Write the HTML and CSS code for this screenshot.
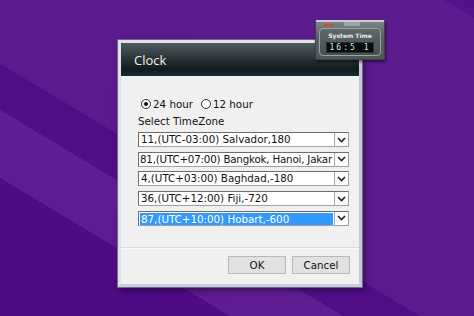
FILE: index.html
```html
<!DOCTYPE html>
<html>
<head>
<meta charset="utf-8">
<link rel="stylesheet" href="styles.css">
</head>
<body>
<div class="desktop">
  <div class="dialog">
    <div class="titlebar">Clock</div>
    <div class="content">
      <div class="radios">
        <label class="radio"><span class="dot checked"></span>24 hour</label>
        <label class="radio"><span class="dot"></span>12 hour</label>
      </div>
      <div class="label">Select TimeZone</div>
      <div class="combo"><span class="val">11,(UTC-03:00) Salvador,180</span><span class="arrow"><svg width="9" height="6" viewBox="0 0 9 6"><path d="M1 1 L4.5 4.5 L8 1" fill="none" stroke="#222" stroke-width="1.6"/></svg></span></div>
      <div class="combo"><span class="val tight">81,(UTC+07:00) Bangkok, Hanoi, Jakar</span><span class="arrow"><svg width="9" height="6" viewBox="0 0 9 6"><path d="M1 1 L4.5 4.5 L8 1" fill="none" stroke="#222" stroke-width="1.6"/></svg></span></div>
      <div class="combo"><span class="val">4,(UTC+03:00) Baghdad,-180</span><span class="arrow"><svg width="9" height="6" viewBox="0 0 9 6"><path d="M1 1 L4.5 4.5 L8 1" fill="none" stroke="#222" stroke-width="1.6"/></svg></span></div>
      <div class="combo"><span class="val">36,(UTC+12:00) Fiji,-720</span><span class="arrow"><svg width="9" height="6" viewBox="0 0 9 6"><path d="M1 1 L4.5 4.5 L8 1" fill="none" stroke="#222" stroke-width="1.6"/></svg></span></div>
      <div class="combo focused"><span class="val">87,(UTC+10:00) Hobart,-600</span><span class="arrow"><svg width="9" height="6" viewBox="0 0 9 6"><path d="M1 1 L4.5 4.5 L8 1" fill="none" stroke="#222" stroke-width="1.6"/></svg></span></div>
    </div>
    <div class="footer">
      <button class="btn">OK</button>
      <button class="btn">Cancel</button>
    </div>
  </div>
  <div class="gadget">
    <div class="g-top"><span class="g-dot"></span><span class="g-dot"></span><span class="g-tab"></span></div>
    <div class="g-panel">
      <div class="g-title">System Time</div>
      <div class="g-display">1<b>6</b>:<b>5</b> 1</div>
    </div>
  </div>
</div>
</body>
</html>
```
FILE: styles.css
```css
html, body { margin: 0; padding: 0; }
body { width: 474px; height: 316px; overflow: hidden; }
.desktop {
  position: relative;
  width: 474px;
  height: 316px;
  overflow: hidden;
  background: linear-gradient(211deg,
    #521189 0%, #54138a 3%,
    #5d1b90 3%, #5c1a8f 58%,
    #500d86 58%, #520e87 65.7%,
    #601d94 65.7%, #5e1b92 77%,
    #4f0b84 77%, #4d0a82 100%);
  font-family: "DejaVu Sans", sans-serif;
}
.dialog {
  position: absolute;
  left: 118px;
  top: 40px;
  width: 238px;
  height: 241px;
  border: 3px solid #dfe0e8;
  border-right-color: #c6c9da;
  border-bottom-color: #c9cadb;
  outline: 1px solid #6e6a8a;
  box-shadow: 2px 3px 6px rgba(20,0,40,0.6);
  background: #f0f0f0;
  display: flex;
  flex-direction: column;
}
.titlebar {
  height: 33px;
  box-sizing: border-box;
  padding: 8px 0 0 13px;
  background: linear-gradient(#505a5f 0%, #2c3639 45%, #0f1b1f 80%, #123038 100%);
  color: #eef2f2;
  font-family: "Open Sans", sans-serif;
  font-size: 13px;
  line-height: 18px;
}
.content {
  flex: 1;
  padding: 22px 10px 0 17px;
  font-size: 10.3px;
  color: #111;
}
.radios { display: flex; gap: 8px; align-items: center; height: 12px; padding-left: 3px; }
.radio { display: flex; align-items: center; gap: 2px; }
.dot {
  width: 8px; height: 8px; border-radius: 50%;
  border: 1px solid #333; background: #fff;
  position: relative;
}
.dot.checked::after {
  content: ""; position: absolute; left: 2px; top: 2px;
  width: 4px; height: 4px; border-radius: 50%; background: #111;
}
.label { margin-top: 5px; height: 13px; }
.combo {
  margin-top: 4.7px;
  height: 15px;
  box-sizing: border-box;
  border: 1px solid #a0a0a0;
  border-top-color: #6d6d6d;
  border-left-color: #6d6d6d;
  background: #fff;
  display: flex;
  align-items: stretch;
}
.label + .combo { margin-top: 4px; }
.val {
  flex: 1;
  overflow: hidden;
  white-space: nowrap;
  padding-left: 2px;
  line-height: 13px;
}
.val.tight { letter-spacing: -0.2px; padding-left: 1px; }
.focused .val { background: #3399ff; color: #fff; margin: 1px 1px 0 1px; line-height: 12px; padding-left: 1px; }
.arrow {
  width: 14px;
  box-sizing: border-box;
  border-left: 1px solid #a8a8a8;
  background: #fbfbfb;
  display: flex; align-items: center; justify-content: center;
}
.footer {
  height: 37px;
  border-top: 1px solid #dadada;
  box-shadow: inset 0 1px 0 #fafafa;
  display: flex;
  justify-content: flex-end;
  align-items: flex-start;
  gap: 6px;
  padding: 8px 9px 0 0;
  box-sizing: border-box;
}
.btn {
  width: 58px; height: 18px;
  border: 1px solid #b8b8b8;
  background: #e1e1e1;
  font-family: "DejaVu Sans", sans-serif;
  font-size: 10.3px;
  color: #111;
  padding: 0;
}
.gadget {
  position: absolute;
  left: 315px; top: 20px;
  width: 70px; height: 40px;
  box-sizing: border-box;
  background: linear-gradient(#7b8486, #586163 40%, #4d5658);
  border: 1px solid #3c4446;
  border-top: 2px solid #c8cccc;
  border-radius: 2px;
  box-shadow: 1px 2px 3px rgba(0,0,0,0.5);
  display: flex; flex-direction: column; align-items: center;
}
.g-top { width: 100%; height: 6px; position: relative; }
.g-dot { position: absolute; top: 1px; width: 4px; height: 4px; border-radius: 50%; background: #d0502a; }
.g-dot:first-child { left: 8px; }
.g-dot:nth-child(2) { left: 13px; }
.g-tab { position: absolute; left: 28px; top: 0; width: 16px; height: 4px; background: #9ea6a8; border-radius: 1px; }
.g-panel {
  width: 62px; height: 28px;
  box-sizing: border-box;
  border: 1px solid #9aa3a5;
  border-radius: 4px;
  background: linear-gradient(#5e686a, #465052);
  display: flex; flex-direction: column; align-items: center;
  padding-top: 3px;
}
.g-title {
  font-family: "DejaVu Sans", sans-serif;
  font-size: 6px; font-weight: bold;
  color: #e8eeee; line-height: 7px;
}
.g-display {
  margin-top: 3px;
  width: 46px; height: 9px;
  background: #0a0d0e;
  border: 1px solid #2a3032;
  color: #cfe6ea;
  font-family: "DejaVu Sans Mono", monospace;
  font-size: 8px; line-height: 9px;
  text-align: center;
  letter-spacing: 2px;
}
.g-display b { font-weight: normal; }
```
